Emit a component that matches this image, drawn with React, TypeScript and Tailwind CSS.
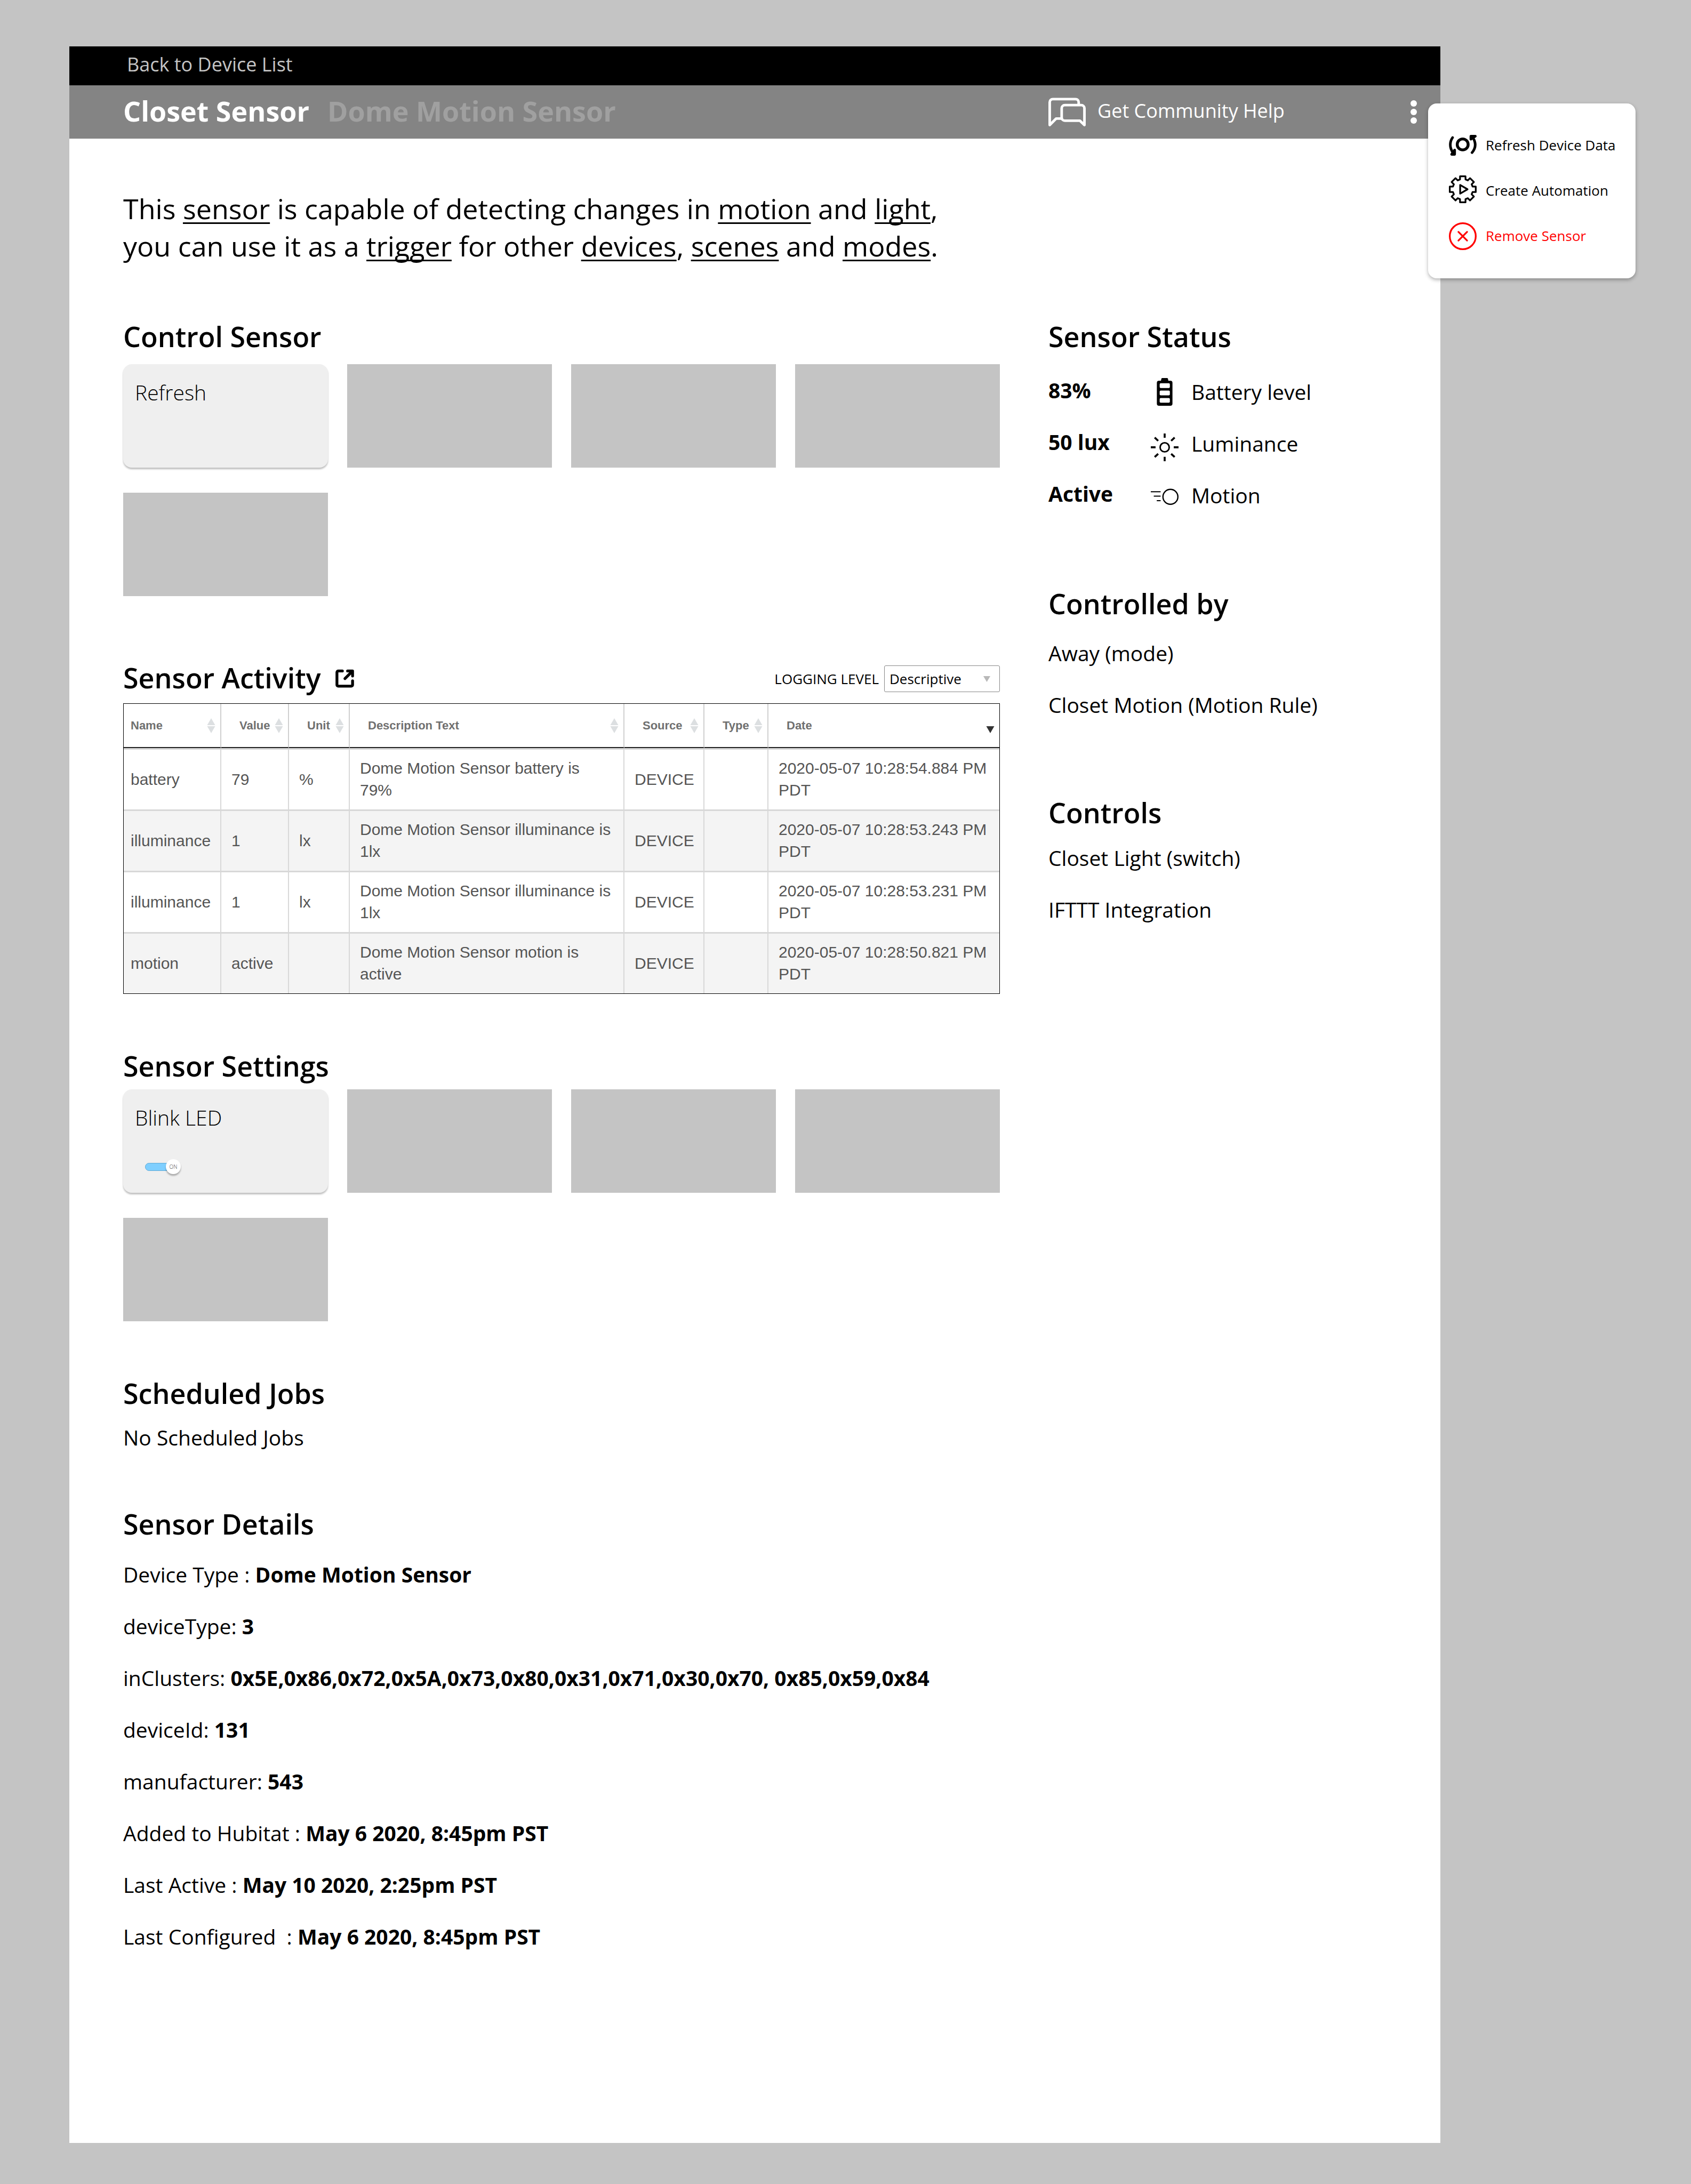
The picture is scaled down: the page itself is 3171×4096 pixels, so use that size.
import React, { useState } from 'react'
import { clsx } from 'clsx'

/* ================= Data ================= */
const activity = [
  { name: 'battery', value: '79', unit: '%', text: 'Dome Motion Sensor battery is 79%', date: '2020-05-07 10:28:54.884 PM PDT' },
  { name: 'illuminance', value: '1', unit: 'lx', text: 'Dome Motion Sensor illuminance is 1lx', date: '2020-05-07 10:28:53.243 PM PDT' },
  { name: 'illuminance', value: '1', unit: 'lx', text: 'Dome Motion Sensor illuminance is 1lx', date: '2020-05-07 10:28:53.231 PM PDT' },
  { name: 'motion', value: 'active', unit: '', text: 'Dome Motion Sensor motion is active', date: '2020-05-07 10:28:50.821 PM PDT' },
]

const columns = [
  { label: 'Name', width: 'w-[183px]' },
  { label: 'Value', width: 'w-[127px]' },
  { label: 'Unit', width: 'w-[114px]' },
  { label: 'Description Text', width: '' },
  { label: 'Source', width: 'w-[150px]' },
  { label: 'Type', width: 'w-[120px]' },
  { label: 'Date', width: 'w-[433px]' },
]

const details = [
  ['Device Type : ', 'Dome Motion Sensor'],
  ['deviceType: ', '3'],
  ['inClusters: ', '0x5E,0x86,0x72,0x5A,0x73,0x80,0x31,0x71,0x30,0x70, 0x85,0x59,0x84'],
  ['deviceId: ', '131'],
  ['manufacturer: ', '543'],
  ['Added to Hubitat : ', 'May 6 2020, 8:45pm PST'],
  ['Last Active : ', 'May 10 2020, 2:25pm PST'],
  ['Last Configured  : ', 'May 6 2020, 8:45pm PST'],
]

/* ================= Icons ================= */
function ChatIcon() {
  return (
    <svg viewBox="49 68 259 214" className="h-[58px] w-[70px]" fill="none" stroke="currentColor" strokeWidth="18" strokeLinejoin="round" aria-hidden>
      <path d="M259 132V115a22 22 0 0 0-22-22H80a22 22 0 0 0-22 22V273L103 228H142" />
      <path d="M141 157a22 22 0 0 1 22-22H277a22 22 0 0 1 22 22V273L268 243H163a22 22 0 0 1-22-22Z" />
    </svg>
  )
}

function RefreshIcon() {
  return (
    <svg viewBox="130 39 193 144" className="h-[39px] w-[52px]" fill="none" stroke="currentColor" strokeWidth="18" strokeLinecap="round" strokeLinejoin="round" aria-hidden>
      <circle cx="226" cy="105" r="38" strokeWidth="20" />
      <path d="M156 57C134 88 134 128 158 162" />
      <path d="M149 174H170V144Z" fill="currentColor" />
      <path d="M291 162C319 128 319 92 297 58" />
      <path d="M283 68V48H314Z" fill="currentColor" />
    </svg>
  )
}

// eight teeth, each the same four points turned by 45 degrees
const tooth = [[-19, -68], [-19, -90], [19, -90], [19, -68]]
const gearPoints = Array.from({ length: 8 }, (_, i) => {
  const cos = Math.cos((i * Math.PI) / 4)
  const sin = Math.sin((i * Math.PI) / 4)
  return tooth.map(([x, y]) => `${(x * cos - y * sin).toFixed(1)},${(x * sin + y * cos).toFixed(1)}`).join(' ')
}).join(' ')

function AutomationIcon() {
  return (
    <svg viewBox="-96 -96 192 214" className="h-[58px] w-[52px]" fill="none" stroke="currentColor" strokeWidth="12" strokeLinejoin="round" aria-hidden>
      <polygon points={gearPoints} />
      <path d="M-18-30V30L33 0Z" />
    </svg>
  )
}

function RemoveIcon() {
  return (
    <svg viewBox="-96 -96 192 192" className="size-[52px]" fill="none" stroke="currentColor" strokeWidth="12" strokeLinecap="round" aria-hidden>
      <circle r="90" />
      <path d="M-30-30 30 30M30-30-30 30" />
    </svg>
  )
}

function OpenIcon() {
  return (
    <svg viewBox="0 -3 43 45" className="h-[37px] w-[35px]" fill="none" stroke="currentColor" strokeWidth="6.5" strokeLinecap="round" strokeLinejoin="round" aria-hidden>
      <path d="M16 3.5H6.5a3 3 0 0 0-3 3V35.5a3 3 0 0 0 3 3H36.5a3 3 0 0 0 3-3V26" />
      <path d="M28 3.5H39.5V15M38 5 22 21" />
    </svg>
  )
}

function BatteryIcon() {
  return (
    <svg viewBox="-14 0 64 64" className="size-[52px]" aria-hidden>
      <path d="M9 8 10.5 1.5Q11 0 12.5 0H23.5Q25 0 25.5 1.5L27 8Z" />
      <rect y="6" width="36" height="58" rx="5" />
      <g fill="#fff">
        <rect x="6.5" y="12" width="23.5" height="11" rx="2.5" />
        <rect x="6.5" y="29" width="23.5" height="11" rx="2.5" />
        <rect x="6.5" y="46" width="23.5" height="11" rx="2.5" />
      </g>
    </svg>
  )
}

function SunIcon() {
  return (
    <svg viewBox="0 -17 64 81" className="h-[66px] w-[52px]" fill="none" stroke="#000" strokeWidth="4.5" aria-hidden>
      <circle cx="32" cy="32" r="10.5" strokeWidth="3.5" />
      <path d="M32 0V10M32 54V64M0 32H11M53 32H64M9 9.5 17 17M55 9.5 47 17M9 54.5 17 47M55 54.5 47 47" />
    </svg>
  )
}

function MotionIcon() {
  return (
    <svg viewBox="0 -7 65 45" className="h-[36px] w-[52px]" fill="none" stroke="#000" strokeWidth="2.5" aria-hidden>
      <circle cx="46" cy="19" r="17.5" strokeWidth="3" />
      <path d="M0 7H23M7 17.5H23M14 28H23" />
    </svg>
  )
}

function SortIcon({ active }: { active?: boolean }) {
  return (
    <svg viewBox="0 0 16 28" className="h-7 w-4" aria-hidden>
      {!active && <path d="M8 0 15.5 13H.5Z" fill="#dcdfe1" />}
      <path d="M8 28 15.5 15H.5Z" fill={active ? '#333' : '#dcdfe1'} />
    </svg>
  )
}

/* ================= Building blocks ================= */
function Heading({ children }: { children: React.ReactNode }) {
  return <h2 className="text-[52px] leading-[70px] font-semibold">{children}</h2>
}

function TileGrid({ children, className }: { children: React.ReactNode; className?: string }) {
  return (
    <div className={clsx('grid auto-rows-[194px] grid-cols-4 gap-x-9 gap-y-[47px]', className)}>
      {children}
      {[1, 2, 3, 4].map((n) => (
        <div key={n} className="bg-[#c4c4c4]" />
      ))}
    </div>
  )
}

const tileClass =
  'flex flex-col items-start rounded-2xl bg-[#efefef] px-[22px] pt-[26px] text-left text-[39px] leading-[54px] font-light shadow-[0_3px_3px_rgba(0,0,0,0.25)]'

function Term({ children }: { children: React.ReactNode }) {
  return (
    <a href="#" className="underline decoration-[3px] underline-offset-[6px] [text-decoration-skip-ink:none]">
      {children}
    </a>
  )
}

function Status({ value, label, icon }: { value: string; label: string; icon: React.ReactNode }) {
  return (
    <li className="flex h-[97px] items-center">
      <strong className="w-48 pb-[6px] font-bold">{value}</strong>
      <span className="mr-6">{icon}</span>
      {label}
    </li>
  )
}

function MenuItem({ icon, children, danger }: { icon: React.ReactNode; children: React.ReactNode; danger?: boolean }) {
  return (
    <li>
      <button type="button" className={clsx('flex h-[85px] w-full items-center gap-[17px] pl-[39px]', danger && 'text-[#ff0000]')}>
        {icon}
        {children}
      </button>
    </li>
  )
}

/* ================= Page header ================= */
function Header() {
  return (
    <header>
      <nav className="flex h-[73px] items-center bg-black pb-[6px] pl-[108px]">
        <a href="#" className="text-[36px] leading-[50px] text-[#c4c4c4]">Back to Device List</a>
      </nav>
      <div className="relative flex h-[100px] items-center bg-[#848484] pb-1 pl-[101px] text-white">
        <h1 className="flex flex-1 gap-[34px] text-[52px] leading-[70px] font-bold">
          Closet Sensor
          <span className="text-[#a0a0a0]">Dome Motion Sensor</span>
        </h1>
        <div className="flex w-[735px] items-center justify-between pr-[44px]">
          <a href="#" className="flex items-center gap-[22px] text-[36px] leading-[50px]">
            <ChatIcon />
            Get Community Help
          </a>
          <button type="button" aria-label="More actions" className="flex flex-col gap-1 pt-1">
            <span className="size-3 rounded-full bg-white" />
            <span className="size-3 rounded-full bg-white" />
            <span className="size-3 rounded-full bg-white" />
          </button>
        </div>

        {/* open overflow menu, hangs over the page edge */}
        <ul className="absolute top-[34px] left-full z-10 -ml-[23px] w-[389px] rounded-2xl bg-white pt-9 pb-[37px] text-[26px] text-black shadow-[0_3px_7px_rgba(0,0,0,0.3)]">
          <MenuItem icon={<RefreshIcon />}>Refresh Device Data</MenuItem>
          <MenuItem icon={<AutomationIcon />}>Create Automation</MenuItem>
          <MenuItem icon={<RemoveIcon />} danger>Remove Sensor</MenuItem>
        </ul>
      </div>
    </header>
  )
}

/* ================= Activity log ================= */
function ActivityTable() {
  const cell =
    'border-b-[3px] border-[#d8d8d8] pt-[14px] pr-[18px] pb-4 pl-[19px] group-first:border-t-[3px] group-last:border-b-0 not-last:border-r-2 first:pl-[13px]'

  return (
    <table className="mt-[13px] w-full table-fixed border-separate border-spacing-0 border border-black text-left font-['Liberation_Sans',Arial,sans-serif] text-[30px] leading-[41px] text-[#555]">
      <colgroup>
        {columns.map((c) => (
          <col key={c.label} className={c.width} />
        ))}
      </colgroup>
      <thead>
        <tr className="text-[22px] leading-[30px] text-[#707070]">
          {columns.map((c) => (
            <th key={c.label} className="h-[83px] border-r-2 border-b-2 border-r-[#d0d0d0] border-b-[#222] p-0 pr-[9px] pl-[34px] font-bold first:pl-[13px] last:border-r-0">
              <span className="flex items-center justify-between">
                {c.label}
                <SortIcon active={c.label === 'Date'} />
              </span>
            </th>
          ))}
        </tr>
      </thead>
      <tbody>
        {activity.map((row, i) => (
          <tr key={i} className="group even:bg-[#f4f4f4]">
            <td className={cell}>{row.name}</td>
            <td className={cell}>{row.value}</td>
            <td className={cell}>{row.unit}</td>
            <td className={cell}>{row.text}</td>
            <td className={cell}>DEVICE</td>
            <td className={cell} />
            <td className={cell}>{row.date}</td>
          </tr>
        ))}
      </tbody>
    </table>
  )
}

export default function App() {
  const [blink, setBlink] = useState(true)

  return (
    <div className="flex min-h-screen flex-col bg-[#c4c4c4] pt-[87px] pr-[470px] pb-[77px] pl-[130px] font-['Open_Sans',sans-serif] text-black">
      <div className="flex-1 bg-white">
        <Header />

        <main className="px-[101px] pt-24 text-[39px] leading-[54px]">
          <p className="text-[52px] leading-[70px]">
            This <Term>sensor</Term> is capable of detecting changes in <Term>motion</Term> and <Term>light</Term>,
            <br />
            you can use it as a <Term>trigger</Term> for other <Term>devices</Term>, <Term>scenes</Term> and{' '}
            <Term>modes</Term>.
          </p>

          <div className="mt-[100px] grid grid-cols-[minmax(0,1fr)_634px] gap-[91px]">
            <div>
              <section>
                <Heading>Control Sensor</Heading>
                <TileGrid className="mt-[17px]">
                  <button type="button" className={tileClass}>Refresh</button>
                </TileGrid>
              </section>

              <section className="mt-[118px]">
                <div className="flex items-center justify-between">
                  <div className="flex items-center gap-[27px]">
                    <Heading>Sensor Activity</Heading>
                    <a href="#" aria-label="Open activity log">
                      <OpenIcon />
                    </a>
                  </div>
                  <div className="flex items-center gap-[10px] pt-1 text-[26px] leading-9">
                    <label htmlFor="logging">LOGGING LEVEL</label>
                    <div className="relative">
                      <select id="logging" className="h-[50px] w-[217px] appearance-none rounded-[3px] border border-[#888] bg-white pl-[9px]">
                        <option>Descriptive</option>
                      </select>
                      <svg viewBox="0 0 13 11" className="pointer-events-none absolute top-5 right-[18px] h-[11px] w-[13px]" aria-hidden>
                        <path d="M0 0H13L6.5 11Z" fill="#b8b8b8" />
                      </svg>
                    </div>
                  </div>
                </div>
                <ActivityTable />
              </section>

              <section className="mt-[100px]">
                <Heading>Sensor Settings</Heading>
                <TileGrid className="mt-[9px]">
                  <div className={tileClass}>
                    <label htmlFor="blink">Blink LED</label>
                    <div className="relative mt-[51px] ml-[19px] flex h-7 w-[67px] items-center">
                      <input
                        id="blink"
                        type="checkbox"
                        role="switch"
                        checked={blink}
                        onChange={() => setBlink(!blink)}
                        className="h-[15px] w-[60px] appearance-none rounded-full border border-[#5fa9d6] bg-[#7fcfff]"
                      />
                      <span className="pointer-events-none absolute top-0 right-0 grid size-7 place-items-center rounded-full bg-white text-[10px] leading-none text-[#444] shadow-[0_3px_3px_rgba(0,0,0,0.3)]">
                        {blink ? 'ON' : 'OFF'}
                      </span>
                    </div>
                  </div>
                </TileGrid>
              </section>

              <section className="mt-[100px]">
                <Heading>Scheduled Jobs</Heading>
                <p className="mt-[21px]">No Scheduled Jobs</p>
              </section>

              <section className="mt-[100px]">
                <Heading>Sensor Details</Heading>
                <ul className="mt-[11px] leading-[97px] whitespace-pre">
                  {details.map(([label, value]) => (
                    <li key={label}>
                      {label}
                      <strong className="font-bold">{value}</strong>
                    </li>
                  ))}
                </ul>
              </section>
            </div>

            <aside>
              <section>
                <Heading>Sensor Status</Heading>
                <ul className="mt-5">
                  <Status value="83%" label="Battery level" icon={<BatteryIcon />} />
                  <Status value="50 lux" label="Luminance" icon={<SunIcon />} />
                  <Status value="Active" label="Motion" icon={<MotionIcon />} />
                </ul>
              </section>

              <section className="mt-[120px]">
                <Heading>Controlled by</Heading>
                <ul className="mt-[9px] leading-[97px]">
                  <li>Away (mode)</li>
                  <li>Closet Motion (Motion Rule)</li>
                </ul>
              </section>

              <section className="mt-[119px]">
                <Heading>Controls</Heading>
                <ul className="mt-px leading-[97px]">
                  <li>Closet Light (switch)</li>
                  <li>IFTTT Integration</li>
                </ul>
              </section>
            </aside>
          </div>
        </main>
      </div>
    </div>
  )
}
